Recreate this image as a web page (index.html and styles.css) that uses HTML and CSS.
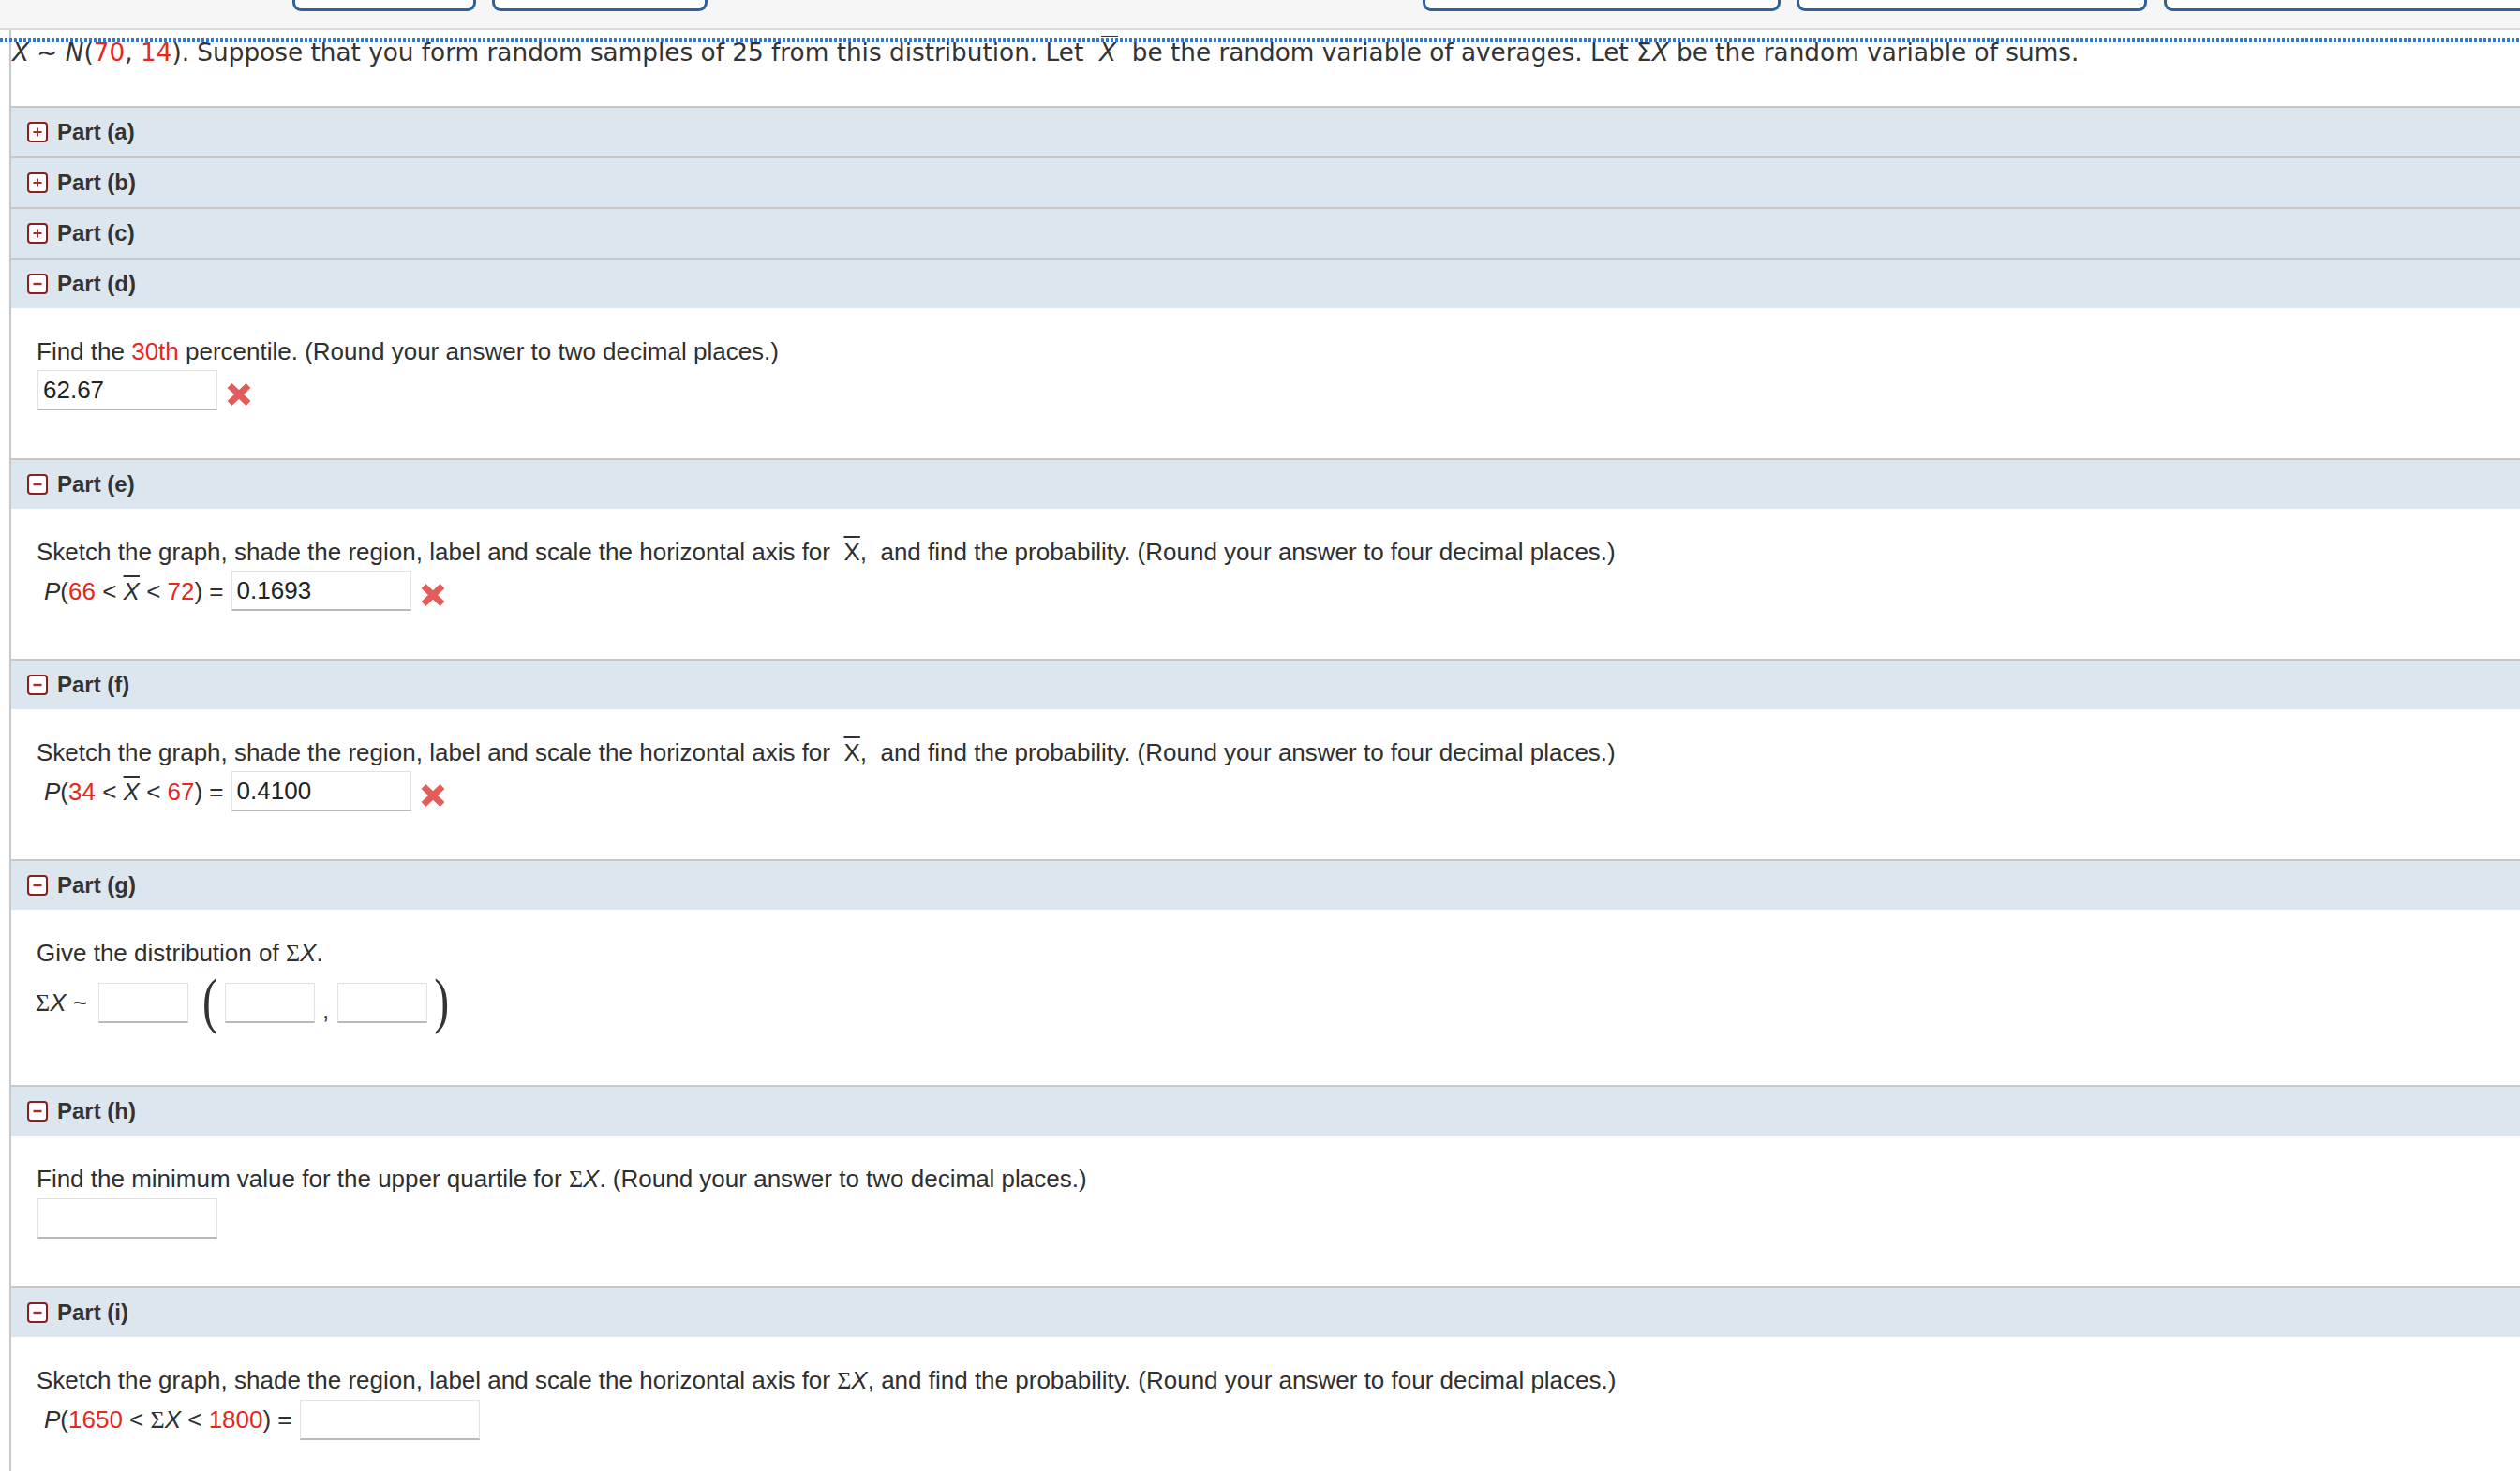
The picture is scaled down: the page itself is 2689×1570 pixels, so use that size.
FILE: index.html
```html
<!DOCTYPE html>
<html>
<head>
<meta charset="utf-8">
<link rel="stylesheet" href="styles.css">
</head>
<body>
<div class="topbar">
  <span class="tab t1"></span>
  <span class="tab t2"></span>
  <span class="tab t3"></span>
  <span class="tab t4"></span>
  <span class="tab t5"></span>
</div>
<div class="content">
  <div class="stem"><i>X</i> ~ <i>N</i>(<span class="red">70</span>, <span class="red">14</span>). Suppose that you form random samples of 25 from this distribution. Let&nbsp; <i class="topbar-x">X</i>&nbsp; be the random variable of averages. Let Σ<i>X</i> be the random variable of sums.</div>

  <div class="part">
    <div class="part-head"><svg class="tog" viewBox="0 0 22 22"><rect x="1" y="1" width="20" height="20" rx="3" fill="#fff" stroke="#8a1f1f" stroke-width="2"/><path d="M6.5 11h9M11 6.5v9" stroke="#a52a2a" stroke-width="2"/></svg><span>Part (a)</span></div>
  </div>
  <div class="part">
    <div class="part-head"><svg class="tog" viewBox="0 0 22 22"><rect x="1" y="1" width="20" height="20" rx="3" fill="#fff" stroke="#8a1f1f" stroke-width="2"/><path d="M6.5 11h9M11 6.5v9" stroke="#a52a2a" stroke-width="2"/></svg><span>Part (b)</span></div>
  </div>
  <div class="part">
    <div class="part-head"><svg class="tog" viewBox="0 0 22 22"><rect x="1" y="1" width="20" height="20" rx="3" fill="#fff" stroke="#8a1f1f" stroke-width="2"/><path d="M6.5 11h9M11 6.5v9" stroke="#a52a2a" stroke-width="2"/></svg><span>Part (c)</span></div>
  </div>

  <div class="part">
    <div class="part-head"><svg class="tog" viewBox="0 0 22 22"><rect x="1" y="1" width="20" height="20" rx="3" fill="#fff" stroke="#8a1f1f" stroke-width="2"/><path d="M6.5 11h9" stroke="#a52a2a" stroke-width="2.4"/></svg><span>Part (d)</span></div>
    <div class="part-body">
      <p class="q">Find the <span class="red">30th</span> percentile. (Round your answer to two decimal places.)</p>
      <div class="ans">
        <span class="inp">62.67</span>
        <svg class="wrong" viewBox="0 0 28 26"><path d="M4 3.5L24 22.5M24 3.5L4 22.5" stroke="#e25c5c" stroke-width="7"/></svg>
      </div>
    </div>
  </div>

  <div class="part">
    <div class="part-head"><svg class="tog" viewBox="0 0 22 22"><rect x="1" y="1" width="20" height="20" rx="3" fill="#fff" stroke="#8a1f1f" stroke-width="2"/><path d="M6.5 11h9" stroke="#a52a2a" stroke-width="2.4"/></svg><span>Part (e)</span></div>
    <div class="part-body">
      <p class="q">Sketch the graph, shade the region, label and scale the horizontal axis for&nbsp; <span class="bar">X</span>,&nbsp; and find the probability. (Round your answer to four decimal places.)</p>
      <div class="ans formula">
        <span class="expr"><i>P</i>(<span class="red">66</span> &lt; <i class="bar">X</i> &lt; <span class="red">72</span>) =</span>
        <span class="inp">0.1693</span>
        <svg class="wrong" viewBox="0 0 28 26"><path d="M4 3.5L24 22.5M24 3.5L4 22.5" stroke="#e25c5c" stroke-width="7"/></svg>
      </div>
    </div>
  </div>

  <div class="part">
    <div class="part-head"><svg class="tog" viewBox="0 0 22 22"><rect x="1" y="1" width="20" height="20" rx="3" fill="#fff" stroke="#8a1f1f" stroke-width="2"/><path d="M6.5 11h9" stroke="#a52a2a" stroke-width="2.4"/></svg><span>Part (f)</span></div>
    <div class="part-body">
      <p class="q">Sketch the graph, shade the region, label and scale the horizontal axis for&nbsp; <span class="bar">X</span>,&nbsp; and find the probability. (Round your answer to four decimal places.)</p>
      <div class="ans formula">
        <span class="expr"><i>P</i>(<span class="red">34</span> &lt; <i class="bar">X</i> &lt; <span class="red">67</span>) =</span>
        <span class="inp">0.4100</span>
        <svg class="wrong" viewBox="0 0 28 26"><path d="M4 3.5L24 22.5M24 3.5L4 22.5" stroke="#e25c5c" stroke-width="7"/></svg>
      </div>
    </div>
  </div>

  <div class="part">
    <div class="part-head"><svg class="tog" viewBox="0 0 22 22"><rect x="1" y="1" width="20" height="20" rx="3" fill="#fff" stroke="#8a1f1f" stroke-width="2"/><path d="M6.5 11h9" stroke="#a52a2a" stroke-width="2.4"/></svg><span>Part (g)</span></div>
    <div class="part-body tall">
      <p class="q">Give the distribution of <span class="sig">Σ</span><i>X</i>.</p>
      <div class="dist">
        <span class="expr"><span class="sig">Σ</span><i>X</i> ~</span>
        <span class="inp sm first"></span>
        <span class="paren open">(</span>
        <span class="inp sm second"></span>
        <span class="comma">,</span>
        <span class="inp sm third"></span>
        <span class="paren close">)</span>
      </div>
    </div>
  </div>

  <div class="part">
    <div class="part-head"><svg class="tog" viewBox="0 0 22 22"><rect x="1" y="1" width="20" height="20" rx="3" fill="#fff" stroke="#8a1f1f" stroke-width="2"/><path d="M6.5 11h9" stroke="#a52a2a" stroke-width="2.4"/></svg><span>Part (h)</span></div>
    <div class="part-body">
      <p class="q">Find the minimum value for the upper quartile for <span class="sig">Σ</span><i>X</i>. (Round your answer to two decimal places.)</p>
      <div class="ans">
        <span class="inp"></span>
      </div>
    </div>
  </div>

  <div class="part">
    <div class="part-head"><svg class="tog" viewBox="0 0 22 22"><rect x="1" y="1" width="20" height="20" rx="3" fill="#fff" stroke="#8a1f1f" stroke-width="2"/><path d="M6.5 11h9" stroke="#a52a2a" stroke-width="2.4"/></svg><span>Part (i)</span></div>
    <div class="part-body">
      <p class="q">Sketch the graph, shade the region, label and scale the horizontal axis for <span class="sig">Σ</span><i>X</i>, and find the probability. (Round your answer to four decimal places.)</p>
      <div class="ans formula">
        <span class="expr"><i>P</i>(<span class="red">1650</span> &lt; <span class="sig">Σ</span><i>X</i> &lt; <span class="red">1800</span>) =</span>
        <span class="inp"></span>
      </div>
    </div>
  </div>
</div>
</body>
</html>
```

FILE: styles.css
```css
* { box-sizing: border-box; }

html, body {
  margin: 0;
  padding: 0;
  background: #ffffff;
}

body {
  font-family: "Liberation Sans", Arial, sans-serif;
  color: #2f2f2f;
  overflow: hidden;
}

.topbar {
  height: 32px;
  background: #f6f6f6;
  border-bottom: 2px solid #dcdcdc;
  display: flex;
  align-items: flex-start;
  padding-left: 312px;
  overflow: hidden;
}

.tab {
  flex: none;
  height: 12px;
  background: #ffffff;
  border: 3px solid #2f6398;
  border-top: none;
  border-radius: 0 0 9px 9px;
}

.t1 { width: 196px; }
.t2 { width: 230px; margin-left: 17px; }
.t3 { width: 382px; margin-left: 763px; }
.t4 { width: 374px; margin-left: 17px; }
.t5 { width: 392px; margin-left: 18px; }

.content {
  margin-left: 10px;
  padding-top: 9px;
  border-left: 2px solid #c8c8c8;
}

.stem {
  margin-left: -12px;
  padding: 4px 0 46px 13px;
  background-image: repeating-linear-gradient(90deg, #3079d9 0 3px, transparent 3px 5px);
  background-size: 100% 4px;
  background-repeat: no-repeat;
  font-family: "DejaVu Sans", Verdana, sans-serif;
  font-size: 26.3px;
  line-height: 22px;
  color: #333333;
  white-space: nowrap;
}

.topbar-x {
  position: relative;
}

.topbar-x::before {
  content: "";
  position: absolute;
  left: 2px;
  right: -2px;
  top: -3px;
  height: 2px;
  background: #333333;
}

.red { color: #e6281e; }

.part-head {
  display: flex;
  align-items: center;
  gap: 10px;
  height: 54px;
  padding-left: 17px;
  border-top: 2px solid #c8c8c8;
  background: #dce6ef;
  font-size: 24px;
  font-weight: bold;
  color: #333333;
}

.tog {
  width: 22px;
  height: 22px;
  flex: none;
}

.part-body {
  padding: 30px 0 51px 27px;
  font-size: 26px;
  line-height: 32px;
  color: #2f2f2f;
}

.part-body.tall {
  padding-bottom: 56px;
}

.q {
  margin: 0;
  white-space: nowrap;
}

.bar {
  text-decoration: overline;
  text-decoration-thickness: 2px;
}

.sig {
  font-family: "Liberation Serif", "Times New Roman", serif;
}

.ans {
  display: flex;
  align-items: center;
  margin-top: 4px;
}

.ans.formula {
  padding-left: 8px;
}

.expr {
  white-space: nowrap;
}

.inp {
  flex: none;
  display: flex;
  align-items: center;
  width: 192px;
  height: 43px;
  margin-left: 1px;
  padding-left: 5px;
  background: #ffffff;
  border: 1px solid #e2e2e2;
  border-bottom: 2px solid #b9b9b9;
  font-size: 26px;
  color: #222222;
}

.formula .inp {
  margin-left: 8px;
}

.wrong {
  flex: none;
  width: 28px;
  height: 26px;
  margin-left: 9px;
  margin-top: 9px;
}

.dist {
  display: flex;
  align-items: center;
  margin-top: 5px;
}

.dist .expr {
  margin-left: -1px;
}

.inp.sm {
  width: 96px;
}

.inp.first { margin-left: 12px; }
.inp.second { margin-left: 8px; }
.inp.third { margin-left: 9px; }

.paren {
  font-family: "Liberation Serif", "Times New Roman", serif;
  font-size: 48px;
  line-height: 57px;
  margin-bottom: 6px;
  color: #333333;
  transform: scaleY(1.35);
}

.paren.open { margin-left: 15px; }
.paren.close { margin-left: 7px; }

.comma {
  margin-left: 8px;
  margin-top: 14px;
}
```
